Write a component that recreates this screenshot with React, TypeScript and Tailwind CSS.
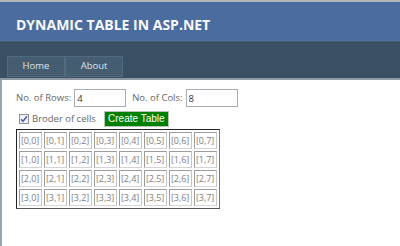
const ROWS = 4;
const COLS = 8;

/** Small checked checkbox, drawn to match the old IE look. */
function CheckMark() {
  return (
    <span className="flex h-[10px] w-[10px] items-center justify-center border border-[#8e8f8f] bg-[#f4f4f4]">
      <svg width="8" height="8" viewBox="0 0 8 8">
        <path d="M1 4.2 L3 6.3 L7 1.2" fill="none" stroke="#4a5dbd" strokeWidth="1.5" />
      </svg>
    </span>
  );
}

export default function App() {
  const body = { fontFamily: '"Open Sans", sans-serif' };

  return (
    <div className="flex h-[246px] w-[400px] flex-col overflow-hidden bg-white" style={body}>
      {/* ---- Title bar ---- */}
      <div className="h-[2px] bg-[#b1b4b8]" />
      <div className="flex h-[39px] items-center bg-[#4b6c9e] pl-4 pt-[6px]">
        <h1 className="text-[14px] font-bold uppercase text-[#f9f9f9]">Dynamic Table in ASP.NET</h1>
      </div>

      {/* ---- Menu ---- */}
      <div className="flex h-[37px] items-end border-t border-[#435c75] bg-[#3a4f63] pb-px pl-[7px]">
        <a className="flex h-[21px] w-[58px] items-center justify-center border border-[#4f6b82] bg-[#465c71] text-[9.5px] text-[#dde4ec]">
          Home
        </a>
        <a className="flex h-[21px] w-[58px] items-center justify-center border border-[#4f6b82] bg-[#465c71] text-[9.5px] text-[#dde4ec]">
          About
        </a>
      </div>
      <div className="h-[2px] bg-[#8d99a5]" />

      {/* ---- Content ---- */}
      <div className="flex-1 border-l-2 border-[#9aa3ab] pl-[14px] pt-[9px] text-[9.5px] text-[#666666]">
        <div className="flex h-[18px] items-center">
          <span>No. of Rows:</span>
          <input
            readOnly
            value="4"
            className="ml-[3px] h-[18px] w-[52px] border border-[#abadb3] px-[2px] text-[9.5px] text-[#333333] outline-none"
          />
          <span className="ml-[6px]">No. of Cols:</span>
          <input
            readOnly
            value="8"
            className="ml-[3px] h-[18px] w-[52px] border border-[#abadb3] px-[2px] text-[9.5px] text-[#333333] outline-none"
          />
        </div>

        <div className="mt-[4px] flex h-[16px] items-center">
          <span className="ml-[3px]">
            <CheckMark />
          </span>
          <span className="ml-[3px]">Broder of cells</span>
          <button
            className="ml-[8px] h-[16px] w-[65px] border border-[#b8c4b8] bg-[#008000] text-[10px] leading-none text-white"
            style={{ fontFamily: '"Liberation Sans", Arial, sans-serif' }}
          >
            Create Table
          </button>
        </div>

        <table className="mt-[2px] w-[204px] table-fixed border-separate border-spacing-[2px] border border-t-[#222222] border-l-[#222222] border-b-[#555555] border-r-[#7a7a7a]">
          <tbody>
            {Array.from({ length: ROWS }, (_, r) => (
              <tr key={r}>
                {Array.from({ length: COLS }, (_, c) => (
                  <td
                    key={c}
                    className="h-[17px] w-[23px] overflow-hidden whitespace-nowrap border border-t-[#9c9c9c] border-l-[#9c9c9c] border-b-[#d4d4d4] border-r-[#c4c4c4] p-px text-left align-middle text-[9px] leading-[13px] tracking-[-0.1px] text-[#7d7d85]"
                  >
                    [{r},{c}]
                  </td>
                ))}
              </tr>
            ))}
          </tbody>
        </table>
      </div>
    </div>
  );
}
